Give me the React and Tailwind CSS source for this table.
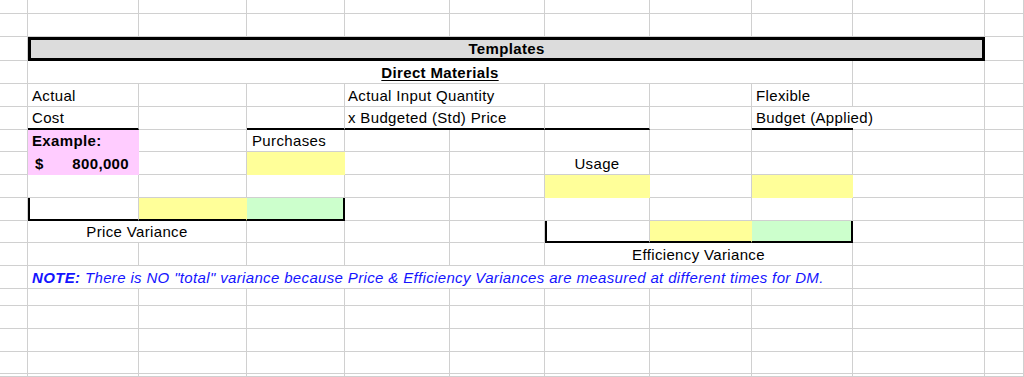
import React from "react";

const spanClass = {
  1: "",
  2: "col-span-2",
  3: "col-span-3",
  8: "col-span-8",
  9: "col-span-9",
};

const fills = {
  pink: "bg-[#ffccff] border-r-[#ffccff] border-b-[#ffccff]",
  yellow: "bg-[#ffff99] border-r-[#ffff99] border-b-[#ffff99]",
  green: "bg-[#ccffcc] border-r-[#ccffcc] border-b-[#ccffcc]",
};

const Cell = ({ span = 1, fill, noR, bl, bb, br, center, className = "", children }) => {
  const cls = [
    "flex items-end pb-[2px] px-[3px] whitespace-nowrap overflow-visible min-w-0",
    spanClass[span],
    center ? "justify-center" : "",
    noR ? "border-r-0" : br ? "border-r-2 border-r-black" : "border-r",
    bb ? "border-b-2 border-b-black" : "border-b",
    bl ? "border-l-2 border-l-black" : "",
    fill ? fills[fill] : "border-r-[#d0d0d0] border-b-[#d0d0d0]",
    br && fill ? "!border-r-black" : "",
    bb && fill ? "!border-b-black" : "",
    className,
  ].join(" ");
  return <div className={cls}>{children}</div>;
};

const blanks = (n, prefix) =>
  Array.from({ length: n }, (_, i) => <Cell key={`${prefix}-${i}`} />);

export default function App() {
  return (
    <div className="w-[1024px] h-[377px] overflow-hidden bg-white font-['Liberation_Sans',Arial,sans-serif] text-[15px] tracking-[0.35px] leading-4 text-black">
      <div className="grid grid-cols-[28px_111px_108px_98px_105px_95px_105px_102px_101px_132px_39px] grid-rows-[14px_23px_24px_23px_23px_23px_22px_23px_23px_23px_22px_23px_23px_17px_23px_23px_22px_3px]">
        {blanks(11, "r0")}
        {blanks(11, "r1")}

        <Cell />
        <div className="col-span-9 flex items-center justify-center border-[3px] border-black bg-[#dcdcdc] font-bold">
          Templates
        </div>
        <Cell />

        <Cell />
        <Cell span={8} center className="font-bold">
          <span className="underline underline-offset-2">Direct Materials</span>
        </Cell>
        {blanks(2, "r3")}

        <Cell />
        <Cell className="pl-[4px]">Actual</Cell>
        {blanks(2, "r4a")}
        <Cell noR>Actual Input Quantity</Cell>
        {blanks(3, "r4b")}
        <Cell className="pl-[4px]">Flexible</Cell>
        {blanks(2, "r4c")}

        <Cell />
        <Cell bb className="pl-[4px]">Cost</Cell>
        <Cell />
        <Cell bb />
        <Cell noR bb>x Budgeted (Std) Price</Cell>
        <Cell bb />
        <Cell bb />
        <Cell />
        <Cell noR bb className="pl-[4px]">Budget (Applied)</Cell>
        {blanks(2, "r5")}

        <Cell />
        <Cell fill="pink" className="font-bold pl-[4px]">Example:</Cell>
        <Cell />
        <Cell className="pl-[5px]">Purchases</Cell>
        {blanks(7, "r6")}

        <Cell />
        <Cell fill="pink" className="font-bold justify-between pl-[7px] pr-[9px]">
          <span>$</span>
          <span>800,000</span>
        </Cell>
        <Cell />
        <Cell fill="yellow" />
        {blanks(2, "r7a")}
        <Cell center>Usage</Cell>
        {blanks(4, "r7b")}

        {blanks(6, "r8a")}
        <Cell fill="yellow" />
        <Cell />
        <Cell fill="yellow" />
        {blanks(2, "r8b")}

        <Cell />
        <Cell bl bb />
        <Cell fill="yellow" bb />
        <Cell fill="green" bb br />
        {blanks(7, "r9")}

        <Cell />
        <Cell span={2} center>Price Variance</Cell>
        {blanks(3, "r10a")}
        <Cell bl bb />
        <Cell fill="yellow" bb />
        <Cell fill="green" bb br />
        {blanks(2, "r10b")}

        {blanks(6, "r11a")}
        <Cell span={3} center>Efficiency Variance</Cell>
        {blanks(2, "r11b")}

        <Cell />
        <Cell span={8} className="italic text-[#1414ff] pl-[4px]">
          <span className="font-bold">NOTE:</span>
          <span>&nbsp;There is NO "total" variance because Price &amp; Efficiency Variances are measured at different times for DM.</span>
        </Cell>
        {blanks(2, "r12")}

        {blanks(11, "r13")}
        {blanks(11, "r14")}
        {blanks(11, "r15")}
        {blanks(11, "r16")}
        {blanks(11, "r17")}
      </div>
    </div>
  );
}
